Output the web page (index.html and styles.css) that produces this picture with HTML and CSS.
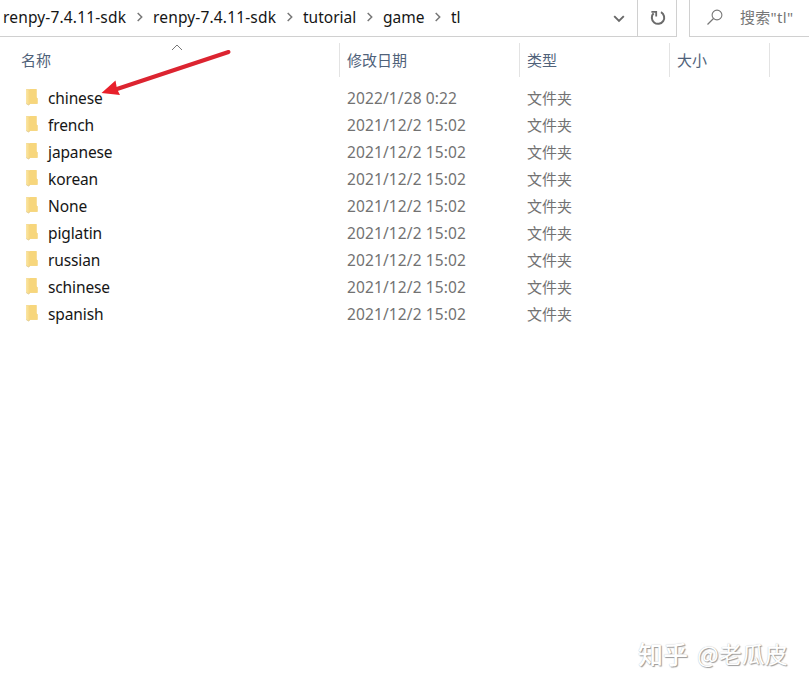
FILE: index.html
```html
<!DOCTYPE html>
<html lang="zh-CN">
<head>
<meta charset="utf-8">
<title>tl</title>
<link rel="stylesheet" href="styles.css">
</head>
<body>
<svg class="defs" width="0" height="0" aria-hidden="true">
  <linearGradient id="front" x1="0" x2="1"><stop offset="0" stop-color="#fbe6a4"/><stop offset="1" stop-color="#f6d67f"/></linearGradient>
  <symbol id="folder" viewBox="0 0 14 18">
    <path d="M1 1.2H11.5V9.5L12.5 10.3V15.7H3L1 15Z" fill="#efcf79"/>
    <path d="M5 1H11.5V9.5L12.5 10.3V15.7H4Z" fill="#f7d67c"/>
    <path d="M1 1.2L4.8 2.5V16.4L3.4 17.2L1 15.6Z" fill="url(#front)"/>
    <path d="M1.2 15.6L3.4 17L4.8 16" fill="none" stroke="#d8c79a" stroke-width=".7"/>
  </symbol>
  <symbol id="chevron" viewBox="0 0 8 10"><path d="M1.7 1L5.7 5L1.7 9" fill="none" stroke="#777" stroke-width="1.5"/></symbol>
</svg>
<header class="toolbar">
  <nav class="address">
    <span class="crumb root">renpy-7.4.11-sdk</span><svg class="sep"><use href="#chevron"/></svg>
    <span class="crumb sdk">renpy-7.4.11-sdk</span><svg class="sep"><use href="#chevron"/></svg>
    <span class="crumb tutorial">tutorial</span><svg class="sep"><use href="#chevron"/></svg>
    <span class="crumb game">game</span><svg class="sep"><use href="#chevron"/></svg>
    <span class="crumb">tl</span>
    <svg class="dropdown" viewBox="0 0 12 8"><path d="M1.2 1.2L6 6L10.8 1.2" fill="none" stroke="#686868" stroke-width="1.9"/></svg>
  </nav>
  <div class="refresh"><svg width="18" height="18" viewBox="0 0 18 18"><path d="M12 3.2A6.2 6.2 0 1 1 4.6 4.3" fill="none" stroke="#6b6b6b" stroke-width="2"/><path d="M2.400 2.800H7.200V7.400" fill="none" stroke="#6b6b6b" stroke-width="1.800"/></svg></div>
  <div class="search"><svg width="17" height="17" viewBox="0 0 17 17"><circle cx="10" cy="6" r="4.9" fill="none" stroke="#777" stroke-width="1.1"/><path d="M6.5 9.500L.5 15.5" stroke="#777" stroke-width="1.2"/></svg><span>搜索"tl"</span></div>
</header>
<main>
  <div class="row heading">
    <div>名称<svg class="sort" viewBox="0 0 12 7"><path d="M1 6L6 1L11 6" fill="none" stroke="#777" stroke-width="1"/></svg></div><div>修改日期</div><div>类型</div><div>大小</div>
  </div>
  <div class="files">
    <div class="row"><div><svg class="folder"><use href="#folder"/></svg><span>chinese</span></div><div>2022/1/28 0:22</div><div>文件夹</div></div>
    <div class="row"><div><svg class="folder"><use href="#folder"/></svg><span>french</span></div><div>2021/12/2 15:02</div><div>文件夹</div></div>
    <div class="row"><div><svg class="folder"><use href="#folder"/></svg><span>japanese</span></div><div>2021/12/2 15:02</div><div>文件夹</div></div>
    <div class="row"><div><svg class="folder"><use href="#folder"/></svg><span>korean</span></div><div>2021/12/2 15:02</div><div>文件夹</div></div>
    <div class="row"><div><svg class="folder"><use href="#folder"/></svg><span>None</span></div><div>2021/12/2 15:02</div><div>文件夹</div></div>
    <div class="row"><div><svg class="folder"><use href="#folder"/></svg><span>piglatin</span></div><div>2021/12/2 15:02</div><div>文件夹</div></div>
    <div class="row"><div><svg class="folder"><use href="#folder"/></svg><span>russian</span></div><div>2021/12/2 15:02</div><div>文件夹</div></div>
    <div class="row"><div><svg class="folder"><use href="#folder"/></svg><span>schinese</span></div><div>2021/12/2 15:02</div><div>文件夹</div></div>
    <div class="row"><div><svg class="folder"><use href="#folder"/></svg><span>spanish</span></div><div>2021/12/2 15:02</div><div>文件夹</div></div>
  </div>
</main>
<svg class="arrow" width="132" height="50" viewBox="0 0 132 50"><path d="M14 44L128.500 6" stroke="#dc2430" stroke-width="4" stroke-linecap="round"/><path d="M1.500 47L15.500 34.500L17 43L20 49Z" fill="#e8202b"/></svg>
<div class="watermark"><span class="brand">知乎</span><span>@老瓜皮</span></div>
</body>
</html>
```
FILE: styles.css
```css
* { box-sizing: border-box; }
body {
  margin: 0;
  width: 809px;
  height: 687px;
  position: relative;
  overflow: hidden;
  background: #fff;
  color: #161616;
  font: 15.5px/27px "Noto Sans", "Noto Sans CJK SC", sans-serif;
  white-space: nowrap;
}
svg { display: block; flex: none; }
.defs { position: absolute; }
.toolbar { display: flex; height: 37px; }
.address {
  display: flex;
  align-items: center;
  width: 638px;
  padding: 0 12px 1px 3px;
  border-right: 1px solid #d0d0d0;
  border-bottom: 1px solid #d0d0d0;
}
.root, .sdk { width: 123px; letter-spacing: .16px; }
.tutorial { width: 53px; }
.game { width: 41px; }
.sep { width: 8px; height: 10px; margin: 0 9px 1px 10px; }
.dropdown { width: 12px; height: 8px; margin: 2px 0 0 auto; }
.refresh {
  width: 39px;
  padding: 9px 0 0 11px;
  border-right: 1px solid #d0d0d0;
  border-bottom: 1px solid #d0d0d0;
}
.search {
  flex: 1;
  display: flex;
  align-items: center;
  margin-left: 12px;
  padding: 0 0 1px 17px;
  gap: 16px;
  border-left: 1px solid #d0d0d0;
  border-bottom: 1px solid #d0d0d0;
  color: #777;
  font-size: 15px;
}
.search span { letter-spacing: .3px; }
.row {
  display: grid;
  grid-template-columns: 340px 180px 150px 100px;
  height: 27px;
  color: #727272;
}
.row > div { padding-left: 7px; }
.files .row > div:nth-child(2) { letter-spacing: .12px; }
.row > div:nth-child(3) { font-size: 15px; }
.row > div:first-child {
  display: flex;
  padding-left: 24px;
  color: #161616;
  letter-spacing: -.12px;
}
.heading { height: 34px; margin-top: 6px; line-height: 34px; }
.row.heading > div {
  position: relative;
  border-right: 1px solid #e3e3e3;
  color: #50627a;
  font-size: 15px;
}
.row.heading > div:first-child { padding-left: 21px; color: #50627a; letter-spacing: 0; }
.sort { position: absolute; left: 171px; top: 1px; width: 12px; height: 7px; }
.files { padding-top: 8px; }
.folder { width: 14px; height: 18px; margin: 3px 9px 0 1px; }
.arrow { position: absolute; left: 100px; top: 46px; }
.watermark {
  position: absolute;
  left: 638px;
  top: 635px;
  display: flex;
  gap: 9px;
  color: #fff;
  font: 23px/36px "Noto Sans CJK SC", sans-serif;
  text-shadow: 1px 1px 1px #999, 0 0 1px #bbb;
}
.brand { font-size: 25px; font-weight: 500; }
```
